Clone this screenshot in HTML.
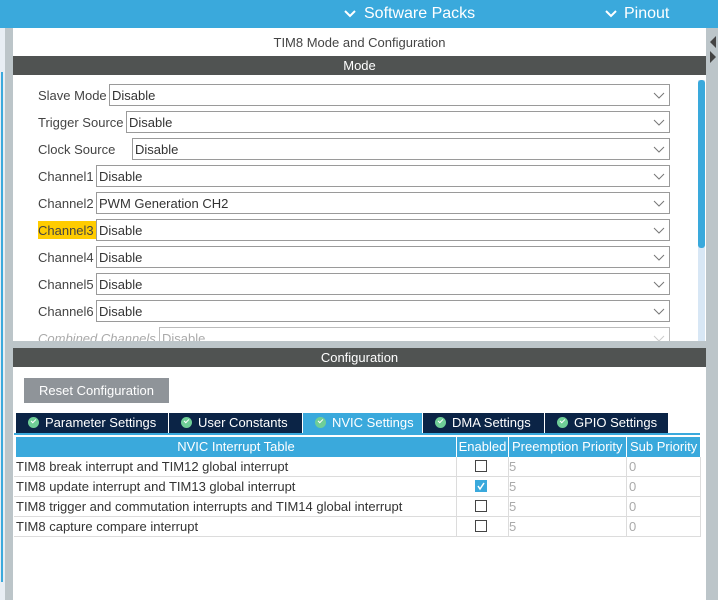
<!DOCTYPE html>
<html><head><style>
*{margin:0;padding:0;box-sizing:border-box}
body{width:718px;height:600px;overflow:hidden;background:#fff;font-family:"Liberation Sans",sans-serif;position:relative;color:#333}
.a{position:absolute}
.top{left:0;top:0;width:718px;height:28px;background:#3aa9dc;color:#fff;font-size:16px}
.lbl{font-size:13px;color:#444;left:38px}
.sel{height:22px;border:1px solid #9a9a9a;font-size:13px;color:#333;padding:3px 2px 0;background:#fff}
.sel svg{position:absolute;right:4px;top:7px}
.hdr{background:#505352;color:#fff;font-size:13px;text-align:center;height:19px;line-height:20px}
.tab{top:413px;height:21px;background:#0b2446;color:#fff;font-size:13px;line-height:20px;padding-left:12px}
.tab i{display:inline-block;width:11px;height:11px;border-radius:50%;background:#6fce97;vertical-align:-1px;margin-right:6px;position:relative}
.tab i:after{content:"";position:absolute;left:3px;top:2px;width:4px;height:2px;border-left:1.5px solid #fff;border-bottom:1.5px solid #fff;transform:rotate(-45deg)}
.th{top:437px;height:20px;background:#3aa9dc;color:#fff;font-size:13px;line-height:20px}
.row{left:14px;width:686px;height:20px;border-bottom:1px solid #dcdcdc;font-size:13px;line-height:19px}
.row span{position:absolute}
.cb{position:absolute;left:461px;top:3px;width:12px;height:12px;border:1px solid #444;background:#fff}
</style></head><body>
<div class="a top">
<svg class="a" style="left:344px;top:10px" width="12" height="8"><path d="M1 1L6 6L11 1" stroke="#fff" stroke-width="2" fill="none"/></svg>
<span class="a" style="left:364px;top:5px">Software Packs</span>
<svg class="a" style="left:605px;top:10px" width="12" height="8"><path d="M1 1L6 6L11 1" stroke="#fff" stroke-width="2" fill="none"/></svg>
<span class="a" style="left:624px;top:5px">Pinout</span>
</div>
<div class="a" style="left:0;top:28px;width:5px;height:572px;background:#e8eef4"></div>
<div class="a" style="left:1px;top:72px;width:2px;height:510px;background:#3aa9dc"></div>
<div class="a" style="left:5px;top:28px;width:8px;height:572px;background:#bcc5c9"></div>
<div class="a" style="left:706px;top:28px;width:12px;height:572px;background:#bcc5c9"></div>
<svg class="a" style="left:708px;top:34px" width="10" height="30"><path d="M8 2L2 8L8 14Z M2 17L8 23L2 29Z" fill="#444"/></svg>
<div class="a" style="left:13px;top:28px;width:693px;height:28px;font-size:13px;text-align:center;line-height:29px;color:#444">TIM8 Mode and Configuration</div>
<div class="a hdr" style="left:13px;top:56px;width:693px">Mode</div>
<div class="a" style="left:698px;top:80px;width:7px;height:261px;background:#d8e7f5"></div>
<div class="a" style="left:698px;top:80px;width:7px;height:168px;background:#3aa9dc;border-radius:3px"></div>

<div class="a lbl" style="top:88px">Slave Mode</div>
<div class="a sel" style="left:109px;top:84px;width:561px">Disable<svg width="12" height="8"><path d="M1 1L6 6L11 1" stroke="#777" fill="none"/></svg></div>
<div class="a lbl" style="top:115px">Trigger Source</div>
<div class="a sel" style="left:126px;top:111px;width:544px">Disable<svg width="12" height="8"><path d="M1 1L6 6L11 1" stroke="#777" fill="none"/></svg></div>
<div class="a lbl" style="top:142px">Clock Source</div>
<div class="a sel" style="left:132px;top:138px;width:538px">Disable<svg width="12" height="8"><path d="M1 1L6 6L11 1" stroke="#777" fill="none"/></svg></div>
<div class="a lbl" style="top:169px">Channel1</div>
<div class="a sel" style="left:96px;top:165px;width:574px">Disable<svg width="12" height="8"><path d="M1 1L6 6L11 1" stroke="#777" fill="none"/></svg></div>
<div class="a lbl" style="top:196px">Channel2</div>
<div class="a sel" style="left:96px;top:192px;width:574px">PWM Generation CH2<svg width="12" height="8"><path d="M1 1L6 6L11 1" stroke="#777" fill="none"/></svg></div>
<div class="a lbl" style="top:221px;background:#ffcc00;height:18px;line-height:20px;width:58px">Channel3</div>
<div class="a sel" style="left:96px;top:219px;width:574px">Disable<svg width="12" height="8"><path d="M1 1L6 6L11 1" stroke="#777" fill="none"/></svg></div>
<div class="a lbl" style="top:250px">Channel4</div>
<div class="a sel" style="left:96px;top:246px;width:574px">Disable<svg width="12" height="8"><path d="M1 1L6 6L11 1" stroke="#777" fill="none"/></svg></div>
<div class="a lbl" style="top:277px">Channel5</div>
<div class="a sel" style="left:96px;top:273px;width:574px">Disable<svg width="12" height="8"><path d="M1 1L6 6L11 1" stroke="#777" fill="none"/></svg></div>
<div class="a lbl" style="top:304px">Channel6</div>
<div class="a sel" style="left:96px;top:300px;width:574px">Disable<svg width="12" height="8"><path d="M1 1L6 6L11 1" stroke="#777" fill="none"/></svg></div>
<div class="a" style="left:13px;top:327px;width:685px;height:14px;overflow:hidden">
<div class="a lbl" style="left:25px;top:4px;color:#aaa;font-style:italic">Combined Channels</div>
<div class="a sel" style="left:146px;top:0;width:511px;color:#aaa;border-color:#bbb">Disable<svg width="12" height="8"><path d="M1 1L6 6L11 1" stroke="#ccc" fill="none"/></svg></div>
</div>
<div class="a" style="left:13px;top:341px;width:693px;height:7px;background:#bcc5c9"></div>
<div class="a hdr" style="left:13px;top:348px;width:693px">Configuration</div>
<div class="a" style="left:24px;top:378px;width:145px;height:25px;background:#8f9499;color:#fff;font-size:13px;text-align:center;line-height:26px">Reset Configuration</div>

<div class="a tab" style="left:16px;width:152px"><i></i>Parameter Settings</div>
<div class="a tab" style="left:169px;width:133px"><i></i>User Constants</div>
<div class="a tab" style="left:303px;width:119px;background:#3aa9dc"><i></i>NVIC Settings</div>
<div class="a tab" style="left:423px;width:121px"><i></i>DMA Settings</div>
<div class="a tab" style="left:545px;width:123px"><i></i>GPIO Settings</div>
<div class="a" style="left:14px;top:433px;width:686px;height:2px;background:#3aa9dc"></div>

<div class="a th" style="left:16px;width:440px;text-align:center">NVIC Interrupt Table</div>
<div class="a th" style="left:457px;width:51px;text-align:center">Enabled</div>
<div class="a th" style="left:509px;width:117px;padding-left:3px">Preemption Priority</div>
<div class="a th" style="left:627px;width:73px;padding-left:3px">Sub Priority</div>

<div class="a row" style="top:457px"><span style="left:2px">TIM8 break interrupt and TIM12 global interrupt</span><div class="cb"></div><span style="left:495px;color:#aaa">5</span><span style="left:615px;color:#aaa">0</span></div>
<div class="a row" style="top:477px"><span style="left:2px">TIM8 update interrupt and TIM13 global interrupt</span><div class="cb" style="background:#3aa9dc;border-color:#3aa9dc"><svg width="10" height="10" style="position:absolute;left:0;top:0"><path d="M2 5L4 8L8 2" stroke="#fff" stroke-width="1.5" fill="none"/></svg></div><span style="left:495px;color:#aaa">5</span><span style="left:615px;color:#aaa">0</span></div>
<div class="a row" style="top:497px"><span style="left:2px">TIM8 trigger and commutation interrupts and TIM14 global interrupt</span><div class="cb"></div><span style="left:495px;color:#aaa">5</span><span style="left:615px;color:#aaa">0</span></div>
<div class="a row" style="top:517px"><span style="left:2px">TIM8 capture compare interrupt</span><div class="cb"></div><span style="left:495px;color:#aaa">5</span><span style="left:615px;color:#aaa">0</span></div>
<div class="a" style="left:456px;top:457px;width:1px;height:80px;background:#dcdcdc"></div>
<div class="a" style="left:508px;top:457px;width:1px;height:80px;background:#dcdcdc"></div>
<div class="a" style="left:626px;top:457px;width:1px;height:80px;background:#dcdcdc"></div>
<div class="a" style="left:700px;top:457px;width:1px;height:80px;background:#dcdcdc"></div>
</body></html>
